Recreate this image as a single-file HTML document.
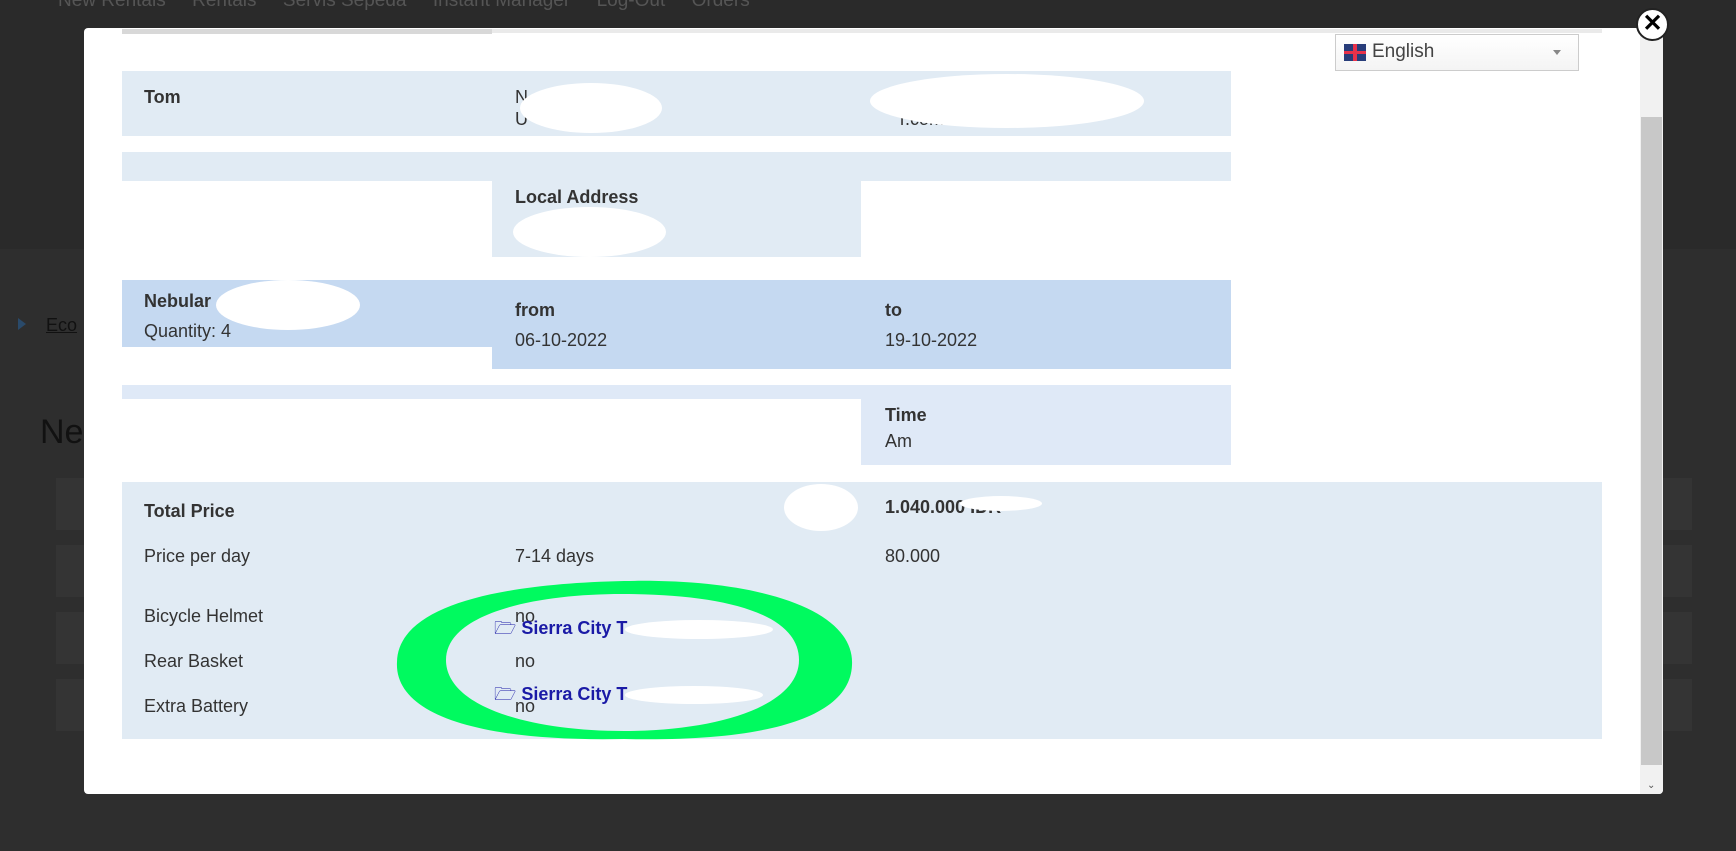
<!DOCTYPE html>
<html><head><meta charset="utf-8"><style>
*{margin:0;padding:0;box-sizing:border-box}
body{width:1736px;height:851px;background:#2e2e2e;position:relative;overflow:hidden;font-family:"Liberation Sans",sans-serif;color:#333}
.a{position:absolute}
.t{position:absolute;font-size:18px;line-height:22px;color:#333}
.b{font-weight:bold}
.c1{background:#e1ebf4}
.c2{background:#c5d9f1}
.c3{background:#dfe9f7}
.w{position:absolute;background:#fff;border-radius:50%}
</style></head><body>
<div class="a" style="left:0;top:0;width:1736px;height:249px;background:#2a2a2a"></div>
<div class="t" style="left:58px;top:-10px;color:#555;font-size:19px">New Rentals &nbsp;&nbsp;&nbsp; Rentals &nbsp;&nbsp;&nbsp; Servis Sepeda &nbsp;&nbsp;&nbsp; Instant Manager &nbsp;&nbsp;&nbsp; Log-Out &nbsp;&nbsp;&nbsp; Orders</div>
<div class="a" style="left:18px;top:318px;width:0;height:0;border-left:8px solid #2a4a6a;border-top:6px solid transparent;border-bottom:6px solid transparent"></div>
<div class="t" style="left:46px;top:314px;color:#111;text-decoration:underline">Eco</div>
<div class="t" style="left:40px;top:412px;color:#111;font-size:34px;line-height:40px">Ne</div>
<div class="a" style="left:56px;top:478px;width:40px;height:52px;background:#343434"></div>
<div class="a" style="left:56px;top:545px;width:40px;height:52px;background:#343434"></div>
<div class="a" style="left:56px;top:612px;width:40px;height:52px;background:#343434"></div>
<div class="a" style="left:56px;top:679px;width:40px;height:52px;background:#343434"></div>
<div class="a" style="left:1662px;top:478px;width:30px;height:52px;background:#343434"></div>
<div class="a" style="left:1662px;top:545px;width:30px;height:52px;background:#343434"></div>
<div class="a" style="left:1662px;top:612px;width:30px;height:52px;background:#343434"></div>
<div class="a" style="left:1662px;top:679px;width:30px;height:52px;background:#343434"></div>

<!-- modal -->
<div class="a" style="left:84px;top:28px;width:1579px;height:766px;background:#fff;border-radius:4px;overflow:hidden">
 <div class="a" style="left:1556px;top:0;width:23px;height:766px;background:#f1f1f1"></div>
 <div class="a" style="left:1557px;top:89px;width:21px;height:648px;background:#c8c8c8"></div>
 <div class="a" style="left:1563px;top:752px;font-size:10px;color:#555">&#8964;</div>
</div>
<div class="a" style="left:122px;top:29px;width:370px;height:5px;background:#d8d8d8"></div>
<div class="a" style="left:492px;top:29px;width:1110px;height:4px;background:#eaeaea"></div>

<!-- row1 -->
<div class="a c1" style="left:122px;top:71px;width:1109px;height:65px"></div>
<div class="t b" style="left:144px;top:86px">Tom</div>
<div class="t" style="left:515px;top:86px">N</div>
<div class="t" style="left:515px;top:108px">U</div>
<div class="t" style="left:900px;top:108px">r.com</div>
<div class="w" style="left:520px;top:83px;width:142px;height:50px"></div>
<div class="w" style="left:870px;top:74px;width:274px;height:54px"></div>
<!-- row2 -->
<div class="a c1" style="left:122px;top:152px;width:1109px;height:29px"></div>
<div class="a c1" style="left:492px;top:181px;width:369px;height:76px"></div>
<div class="t b" style="left:515px;top:186px">Local Address</div>
<div class="w" style="left:513px;top:207px;width:153px;height:50px"></div>
<!-- row3 -->
<div class="a c2" style="left:122px;top:280px;width:1109px;height:67px"></div>
<div class="a c2" style="left:492px;top:347px;width:739px;height:22px"></div>
<div class="t b" style="left:144px;top:290px">Nebular</div>
<div class="t" style="left:144px;top:320px">Quantity: 4</div>
<div class="w" style="left:216px;top:280px;width:144px;height:50px"></div>
<div class="t b" style="left:515px;top:299px">from</div>
<div class="t" style="left:515px;top:329px">06-10-2022</div>
<div class="t b" style="left:885px;top:299px">to</div>
<div class="t" style="left:885px;top:329px">19-10-2022</div>
<!-- row4 -->
<div class="a c3" style="left:122px;top:385px;width:1109px;height:14px"></div>
<div class="a c3" style="left:861px;top:399px;width:370px;height:66px"></div>
<div class="t b" style="left:885px;top:404px">Time</div>
<div class="t" style="left:885px;top:430px">Am</div>
<!-- total -->
<div class="a c1" style="left:122px;top:482px;width:1480px;height:257px"></div>
<div class="t b" style="left:144px;top:500px">Total Price</div>
<div class="t b" style="left:885px;top:496px">1.040.000 IDR</div>
<div class="w" style="left:784px;top:484px;width:74px;height:47px"></div>
<div class="w" style="left:960px;top:496px;width:82px;height:15px"></div>
<div class="t" style="left:144px;top:545px">Price per day</div>
<div class="t" style="left:515px;top:545px">7-14 days</div>
<div class="t" style="left:885px;top:545px">80.000</div>
<div class="t" style="left:144px;top:605px">Bicycle Helmet</div>
<div class="t" style="left:515px;top:605px">no</div>
<div class="t" style="left:144px;top:650px">Rear Basket</div>
<div class="t" style="left:515px;top:650px">no</div>
<div class="t" style="left:144px;top:695px">Extra Battery</div>
<div class="t" style="left:515px;top:695px">no</div>
<div class="t b" style="left:494px;top:617px;color:#1a1aa6"><span style="font-weight:normal">&#128449;</span> Sierra City T</div>
<div class="t b" style="left:494px;top:683px;color:#1a1aa6"><span style="font-weight:normal">&#128449;</span> Sierra City T</div>
<div class="w" style="left:625px;top:620px;width:148px;height:19px"></div>
<div class="w" style="left:625px;top:686px;width:138px;height:18px"></div>
<svg class="a" style="left:0;top:0" width="1736" height="851"><path fill="#00fa5f" fill-rule="evenodd" d="M624 581 C760 578 855 610 852 665 C850 720 760 742 624 739 C480 742 394 715 397 662 C398 608 490 584 624 581 Z M622 594 C530 594 446 615 446 660 C446 705 525 731 624 731 C720 731 799 705 799 660 C799 612 720 594 622 594 Z"/></svg>

<!-- select -->
<div class="a" style="left:1335px;top:34px;width:244px;height:37px;border:1px solid #ccc;background:linear-gradient(#fff,#f4f4f4)"></div>
<div class="a" style="left:1344px;top:44px;width:22px;height:17px;background:#283d7a"></div>
<div class="a" style="left:1344px;top:51px;width:22px;height:3px;background:#e8324a"></div>
<div class="a" style="left:1353px;top:44px;width:4px;height:17px;background:#e8324a"></div>
<div class="t" style="left:1372px;top:41px;color:#444;font-size:19px">English</div>
<div class="a" style="left:1553px;top:50px;border-top:5px solid #888;border-left:4px solid transparent;border-right:4px solid transparent"></div>
<!-- close -->
<div class="a" style="left:1636px;top:8px;width:33px;height:33px;border-radius:50%;background:#fff;border:2px solid #222;text-align:center;font:bold 24px/28px 'Liberation Sans',sans-serif;color:#000">&#10005;</div>
</body></html>
